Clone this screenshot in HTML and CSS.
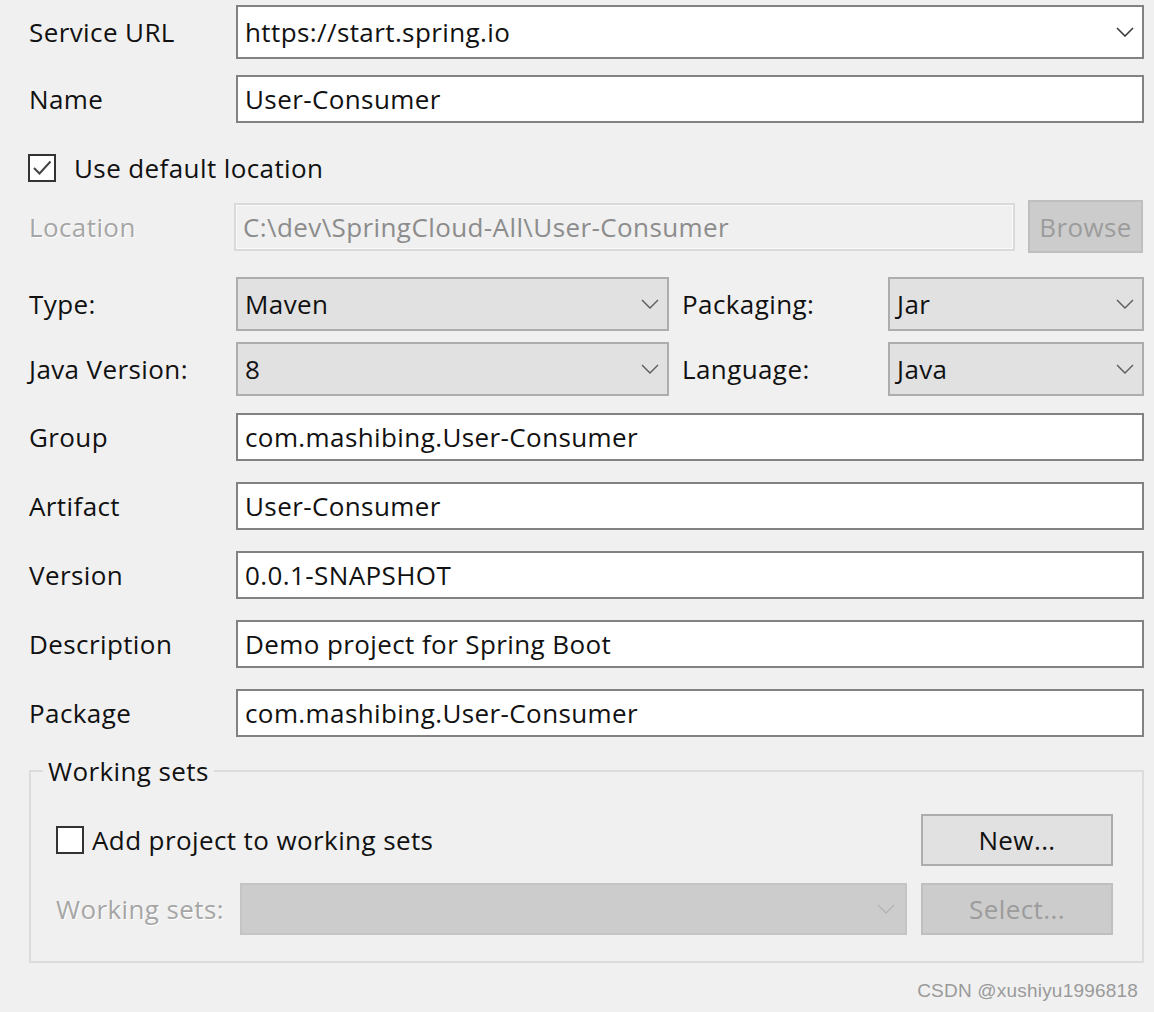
FILE: index.html
```html
<!DOCTYPE html>
<html>
<head>
<meta charset="utf-8">
<link rel="stylesheet" href="styles.css">
</head>
<body>
<div class="form">
  <div class="row r-url">
    <div class="lbl">Service URL</div>
    <div class="field combo-white">
      <span class="val">https://start.spring.io</span>
      <svg class="chev" width="18" height="10" viewBox="0 0 18 10"><path d="M1 1 L9 9 L17 1" fill="none" stroke="#3a3a3a" stroke-width="1.6"/></svg>
    </div>
  </div>
  <div class="row r-name">
    <div class="lbl">Name</div>
    <div class="field"><span class="val">User-Consumer</span></div>
  </div>
  <div class="row r-check">
    <div class="cbox checked">
      <svg width="24" height="24" viewBox="0 0 24 24"><path d="M4 12 L9.5 17.5 L20.5 5.5" fill="none" stroke="#444" stroke-width="2"/></svg>
    </div>
    <div class="check-lbl">Use default location</div>
  </div>
  <div class="row r-loc">
    <div class="lbl disabled">Location</div>
    <div class="field field-disabled"><span class="val">C:\dev\SpringCloud-All\User-Consumer</span></div>
    <div class="btn btn-disabled browse">Browse</div>
  </div>
  <div class="row r-type">
    <div class="lbl">Type:</div>
    <div class="field combo combo-left">
      <span class="val">Maven</span>
      <svg class="chev" width="18" height="10" viewBox="0 0 18 10"><path d="M1 1 L9 9 L17 1" fill="none" stroke="#5a5a5a" stroke-width="1.4"/></svg>
    </div>
    <div class="lbl2">Packaging:</div>
    <div class="field combo">
      <span class="val">Jar</span>
      <svg class="chev" width="18" height="10" viewBox="0 0 18 10"><path d="M1 1 L9 9 L17 1" fill="none" stroke="#5a5a5a" stroke-width="1.4"/></svg>
    </div>
  </div>
  <div class="row r-java">
    <div class="lbl">Java Version:</div>
    <div class="field combo combo-left">
      <span class="val">8</span>
      <svg class="chev" width="18" height="10" viewBox="0 0 18 10"><path d="M1 1 L9 9 L17 1" fill="none" stroke="#5a5a5a" stroke-width="1.4"/></svg>
    </div>
    <div class="lbl2">Language:</div>
    <div class="field combo">
      <span class="val">Java</span>
      <svg class="chev" width="18" height="10" viewBox="0 0 18 10"><path d="M1 1 L9 9 L17 1" fill="none" stroke="#5a5a5a" stroke-width="1.4"/></svg>
    </div>
  </div>
  <div class="row r-text r-group">
    <div class="lbl">Group</div>
    <div class="field"><span class="val">com.mashibing.User-Consumer</span></div>
  </div>
  <div class="row r-text">
    <div class="lbl">Artifact</div>
    <div class="field"><span class="val">User-Consumer</span></div>
  </div>
  <div class="row r-text">
    <div class="lbl">Version</div>
    <div class="field"><span class="val">0.0.1-SNAPSHOT</span></div>
  </div>
  <div class="row r-text">
    <div class="lbl">Description</div>
    <div class="field"><span class="val">Demo project for Spring Boot</span></div>
  </div>
  <div class="row r-text">
    <div class="lbl">Package</div>
    <div class="field"><span class="val">com.mashibing.User-Consumer</span></div>
  </div>

  <fieldset class="wsets">
    <legend>Working sets</legend>
    <div class="ws-inner">
      <div class="row ws-row1">
        <div class="cbox"></div>
        <div class="ws-check-lbl">Add project to working sets</div>
        <div class="spacer"></div>
        <div class="btn ws-btn">New...</div>
      </div>
      <div class="row ws-row2">
        <div class="ws-lbl disabled">Working sets:</div>
        <div class="field combo-disabled">
          <svg class="chev" width="18" height="10" viewBox="0 0 18 10"><path d="M1 1 L9 9 L17 1" fill="none" stroke="#b4b4b4" stroke-width="1.4"/></svg>
        </div>
        <div class="btn btn-disabled ws-btn">Select...</div>
      </div>
    </div>
  </fieldset>

  <div class="watermark">CSDN @xushiyu1996818</div>
</div>
</body>
</html>
```

FILE: styles.css
```css
html, body {
  margin: 0;
  padding: 0;
  background: #f0f0f0;
}
body {
  width: 1154px;
  height: 1012px;
  overflow: hidden;
  font-family: "Open Sans", "Noto Sans", sans-serif;
  font-size: 26px;
  letter-spacing: 0.4px;
  color: #111;
}
.form {
  padding: 5px 10px 0 29px;
}
.row {
  display: flex;
  align-items: center;
}
.lbl {
  width: 207px;
  flex: none;
  white-space: nowrap;
}
.lbl2 {
  width: 206px;
  margin-left: 13px;
  flex: none;
  white-space: nowrap;
}
.disabled {
  color: #a6a6a6;
  text-shadow: 1px 1px 0 #ffffff;
}
.field {
  flex: 1;
  align-self: stretch;
  box-sizing: border-box;
  background: #ffffff;
  border: 2px solid #828282;
  display: flex;
  align-items: center;
  padding: 0 8px 0 7px;
  white-space: nowrap;
  min-width: 0;
}
.val {
  flex: 1;
}
.chev {
  flex: none;
  margin-left: auto;
}
.r-url { height: 54px; }
.r-name { height: 48px; margin-top: 16px; }
.r-check { height: 28px; margin-top: 31px; }
.r-loc { height: 53px; margin-top: 18px; }
.r-type { height: 54px; margin-top: 24px; }
.r-java { height: 54px; margin-top: 11px; }
.r-text { height: 48px; margin-top: 21px; }
.r-group { margin-top: 17px; }

.cbox {
  width: 28px;
  height: 28px;
  box-sizing: border-box;
  border: 2px solid #333333;
  background: #ffffff;
  flex: none;
  display: flex;
  align-items: center;
  justify-content: center;
}
.r-check .cbox { margin-left: -1px; }
.check-lbl {
  margin-left: 18px;
}

.field-disabled {
  align-self: auto;
  height: 48px;
  background: #f0f0f0;
  border: 2px solid #dadada;
  box-shadow: inset 0 0 0 1px #fafafa;
  color: #8c8c8c;
  margin-left: -2px;
  flex: none;
  width: 781px;
}
.btn {
  box-sizing: border-box;
  background: #e1e1e1;
  border: 2px solid #adadad;
  display: flex;
  align-items: center;
  justify-content: center;
  flex: none;
}
.btn-disabled {
  background: #cccccc;
  border-color: #bfbfbf;
  color: #9c9c9c;
}
.browse {
  width: 115px;
  height: 53px;
  margin-left: 13px;
}

.combo {
  background: #e1e1e1;
  border-color: #adadad;
}
.combo-left {
  flex: none;
  width: 433px;
}

.wsets {
  margin: 19px 0 0 0;
  padding: 0 0 26px 12px;
  border: 2px solid #dcdcdc;
  min-width: 0;
}
.wsets legend {
  padding: 0 5px;
  line-height: 30px;
}
.ws-inner {
  padding: 28px 29px 0 13px;
}
.ws-row1 {
  height: 52px;
}
.ws-check-lbl {
  margin-left: 8px;
}
.spacer { flex: 1; }
.ws-btn {
  width: 192px;
  height: 52px;
}
.ws-row2 {
  height: 52px;
  margin-top: 17px;
}
.ws-lbl {
  width: 184px;
  flex: none;
  white-space: nowrap;
}
.combo-disabled {
  background: #cccccc;
  border: 2px solid #c4c4c4;
  margin-right: 14px;
}
.combo-disabled .chev { margin-right: 2px; }

.watermark {
  font-family: "Liberation Sans", Arial, sans-serif;
  font-size: 19px;
  color: #9a9a9a;
  text-align: right;
  margin-top: 17px;
  padding-right: 6px;
  letter-spacing: 0.2px;
}
```
